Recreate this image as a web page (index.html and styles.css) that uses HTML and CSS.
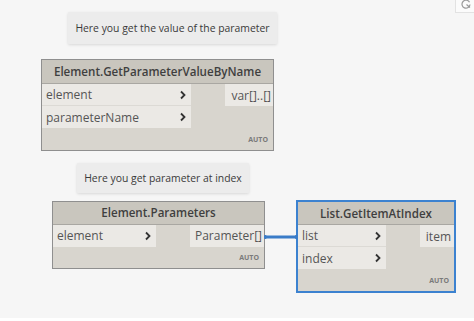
FILE: index.html
```html
<!DOCTYPE html>
<html>
<head>
<meta charset="utf-8">
<link rel="stylesheet" href="styles.css">
</head>
<body>
<div class="canvas">
  <div class="corner-btn">
    <svg width="12" height="12" viewBox="0 0 12 12"><path d="M9.5 4.2A4 4 0 1 0 10 6.5" fill="none" stroke="#9a9a9a" stroke-width="1.2"/><path d="M6.5 6.5L10 9.5" stroke="#9a9a9a" stroke-width="1.2"/></svg>
  </div>

  <div class="note note-a">Here you get the value of the parameter</div>

  <div class="node node-a">
    <div class="node-title">Element.GetParameterValueByName</div>
    <div class="node-body">
      <div class="inputs">
        <div class="port-in"><span>element</span><svg class="chev" viewBox="0 0 8 10"><path d="M2 1.5L5.5 5L2 8.5" /></svg></div>
        <div class="port-in"><span>parameterName</span><svg class="chev" viewBox="0 0 8 10"><path d="M2 1.5L5.5 5L2 8.5" /></svg></div>
      </div>
      <div class="outputs">
        <div class="port-out">var[]..[]</div>
      </div>
    </div>
    <div class="lacing">AUTO</div>
  </div>

  <div class="note note-b">Here you get parameter at index</div>

  <div class="node node-b">
    <div class="node-title">Element.Parameters</div>
    <div class="node-body">
      <div class="inputs">
        <div class="port-in"><span>element</span><svg class="chev" viewBox="0 0 8 10"><path d="M2 1.5L5.5 5L2 8.5" /></svg></div>
      </div>
      <div class="outputs">
        <div class="port-out">Parameter[]</div>
      </div>
    </div>
    <div class="lacing">AUTO</div>
  </div>

  <div class="node node-c selected">
    <div class="node-title">List.GetItemAtIndex</div>
    <div class="node-body">
      <div class="inputs">
        <div class="port-in"><span>list</span><svg class="chev" viewBox="0 0 8 10"><path d="M2 1.5L5.5 5L2 8.5" /></svg></div>
        <div class="port-in"><span>index</span><svg class="chev" viewBox="0 0 8 10"><path d="M2 1.5L5.5 5L2 8.5" /></svg></div>
      </div>
      <div class="outputs">
        <div class="port-out">item</div>
      </div>
    </div>
    <div class="lacing">AUTO</div>
  </div>

  <svg class="wire" width="40" height="12" viewBox="0 0 40 12">
    <rect x="2" y="4" width="2.5" height="4" rx="1" fill="#3a7cc8"/>
    <line x1="3" y1="6" x2="35" y2="6" stroke="#3a7cc8" stroke-width="3"/>
    <rect x="33" y="4" width="2.5" height="4" rx="1" fill="#3a7cc8"/>
  </svg>
</div>
</body>
</html>
```

FILE: styles.css
```css
* { box-sizing: border-box; }
html, body {
  margin: 0;
  padding: 0;
  background: #ffffff;
}
.canvas {
  position: relative;
  width: 474px;
  height: 318px;
  background: #f6f6f6;
  font-family: "Open Sans", "Noto Sans", sans-serif;
  overflow: hidden;
}
.corner-btn {
  position: absolute;
  left: 455px;
  top: -6px;
  width: 22px;
  height: 19px;
  background: #fbfbfb;
  border: 1px solid #e2e2e2;
  display: flex;
  align-items: flex-end;
  justify-content: center;
  padding-bottom: 2px;
}
.note {
  position: absolute;
  background: #ececec;
  color: #3a3a3a;
  font-size: 10.4px;
  display: flex;
  align-items: center;
  justify-content: center;
  box-shadow: 0 1px 3px rgba(0,0,0,0.12);
  border-radius: 1px;
}
.note-a { left: 68px; top: 12px; width: 209px; height: 32px; }
.note-b { left: 77px; top: 163px; width: 172px; height: 30px; }

.node {
  position: absolute;
  background: #d8d5ce;
  border: 1px solid #8f8f8f;
  display: flex;
  flex-direction: column;
}
.node-title {
  height: 24px;
  background: #c9c6be;
  border-bottom: 1px solid #a9a7a2;
  color: #3f3f3f;
  font-size: 11.6px;
  font-weight: 600;
  display: flex;
  align-items: center;
  justify-content: center;
}
.node-body {
  display: flex;
  justify-content: space-between;
  flex: 1;
}
.inputs { display: flex; flex-direction: column; }
.port-in {
  height: 22px;
  background: #ebe9e5;
  border-bottom: 1px solid #dcdad5;
  display: flex;
  align-items: center;
  justify-content: space-between;
  padding: 0 4px 0 4px;
  color: #555555;
  font-size: 12px;
}
.port-in:last-child { border-bottom: none; }
.chev {
  width: 8px;
  height: 10px;
}
.chev path {
  fill: none;
  stroke: #333333;
  stroke-width: 1.8;
}
.outputs { display: flex; flex-direction: column; }
.port-out {
  height: 22px;
  background: #ebe9e5;
  color: #555555;
  font-size: 12px;
  display: flex;
  align-items: center;
  justify-content: flex-end;
  padding: 0 2px 0 5px;
}
.lacing {
  height: 22px;
  display: flex;
  align-items: center;
  justify-content: flex-end;
  padding-right: 5px;
  font-size: 7px;
  font-weight: 700;
  color: #7a7a7a;
}

.node-a { left: 41px; top: 59px; width: 233px; height: 92px; }
.node-a .inputs { width: 149px; }
.node-a .port-out { width: 48px; }

.node-b { left: 52px; top: 201px; width: 213px; height: 68px; }
.node-b .inputs { width: 103px; }
.node-b .port-out { width: 74px; }

.node-c { left: 296px; top: 200px; width: 160px; height: 93px; }
.node-c.selected { border: 2px solid #3c82d0; }
.node-c .inputs { width: 88px; }
.node-c .port-out { width: 34px; padding-right: 3px; }
.node-c .node-title { height: 23px; }

.wire {
  position: absolute;
  left: 262px;
  top: 231px;
}
```
